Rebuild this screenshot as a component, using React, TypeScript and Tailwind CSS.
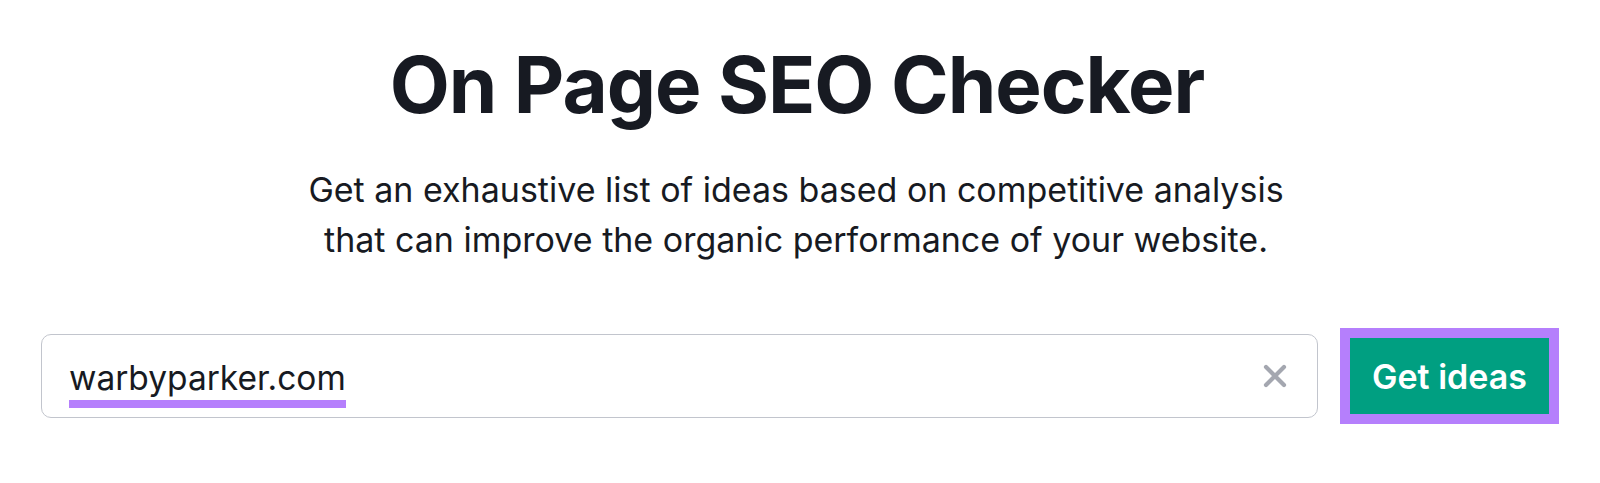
export default function App() {
  return (
    <div
      className="min-h-screen bg-white flex flex-col items-center px-[41px] pt-[46px] text-[#171a22]"
      style={{ fontFamily: 'Inter, "Noto Sans", sans-serif' }}
    >
      <h1 className="pr-[6px] text-[78px] leading-none font-bold tracking-[-1px]">On Page SEO Checker</h1>

      <p className="pr-[8px] mt-[41px] text-[34px] leading-[50px] text-center">
        Get an exhaustive list of ideas based on competitive analysis
        <br />
        that can improve the organic performance of your website.
      </p>

      {/* Search row */}
      <div className="mt-[63px] w-full flex items-center gap-[22px]">
        <div className="flex-1 h-[84px] flex justify-between pl-[27px] pr-[29px] border border-[#c2c5cd] rounded-[10px]">
          <span className="self-end mb-[9px] text-[33.5px] leading-none pb-[5px] border-b-[8px] border-[#b57ffc]">
            warbyparker.com
          </span>
          <svg width="26" height="26" viewBox="0 0 26 26" className="self-center text-[#a4a7b0]">
            <path d="M4 4L22 22M22 4L4 22" stroke="currentColor" strokeWidth="4.2" strokeLinecap="round" />
          </svg>
        </div>
        <button className="w-[219px] h-[96px] border-[10px] border-[#b57ffc] bg-[#009f81] text-white text-[34px] font-semibold flex items-center justify-center">
          Get ideas
        </button>
      </div>
    </div>
  )
}
